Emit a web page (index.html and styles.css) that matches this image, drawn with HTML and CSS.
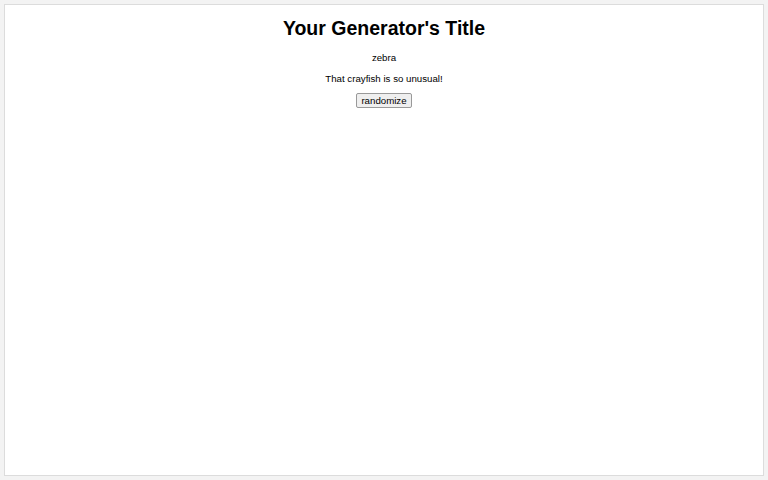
FILE: index.html
```html
<!DOCTYPE html>
<html>
<head>
<meta charset="utf-8">
<link rel="stylesheet" href="styles.css">
</head>
<body>
<div class="panel">
  <h1 class="title">Your Generator's Title</h1>
  <p class="word">zebra</p>
  <p class="sentence">That crayfish is so unusual!</p>
  <button class="btn">randomize</button>
</div>
</body>
</html>
```
FILE: styles.css
```css
html, body {
  margin: 0;
  height: 100%;
}
body {
  background: #f3f3f3;
  padding: 4px 4px 4px 4px;
  box-sizing: border-box;
  font-family: "Liberation Sans", Arial, sans-serif;
}
.panel {
  background: #fff;
  border: 1px solid #dcdcdc;
  height: 100%;
  box-sizing: border-box;
  text-align: center;
  padding-top: 12px;
}
.title {
  font-size: 19.5px;
  font-weight: bold;
  margin: 0 0 12px 0;
  color: #000;
}
.word {
  font-size: 9.7px;
  margin: 0 0 10px 0;
  color: #000;
}
.sentence {
  font-size: 9.7px;
  margin: 0 0 6px 0;
  color: #000;
}
.btn {
  font-family: "Liberation Sans", Arial, sans-serif;
  font-size: 9.7px;
  padding: 1px 4px;
  background: #efefef;
  border: 1px solid #999;
  border-radius: 2px;
  color: #000;
}
```
